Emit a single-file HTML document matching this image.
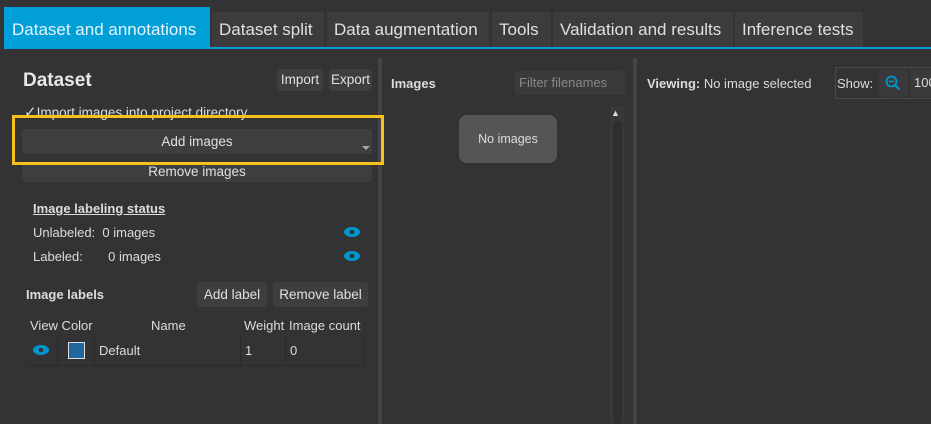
<!DOCTYPE html>
<html><head><style>
*{margin:0;padding:0;box-sizing:border-box}
body{width:931px;height:424px;background:#333335;font-family:"Liberation Sans",sans-serif;color:#dcdcdc;position:relative;overflow:hidden;font-size:13px}
.a{position:absolute;white-space:nowrap}
.tab{position:absolute;top:12px;height:35px;background:#3c3c3e;font-size:17px;line-height:35px;color:#e0e0e0;padding-left:7px}
.btn{position:absolute;background:#3e3e40;border-radius:3px;text-align:center;color:#e0e0e0;font-size:13.5px}
.eye{position:absolute;width:16px;height:10px}
</style></head><body>
<div class="a" style="left:4px;top:7px;width:206px;height:40px;background:#009fd8;color:#e8f4fa;font-size:17px;line-height:45px;padding-left:8px">Dataset and annotations</div>
<div class="tab" style="left:212px;width:112px">Dataset split</div>
<div class="tab" style="left:327px;width:162px">Data augmentation</div>
<div class="tab" style="left:492px;width:59px">Tools</div>
<div class="tab" style="left:553px;width:180px">Validation and results</div>
<div class="tab" style="left:735px;width:128px">Inference tests</div>
<div class="a" style="left:4px;top:47px;width:927px;height:2px;background:#009fd8"></div>

<div class="a" style="left:378px;top:58px;width:4px;height:366px;background:#444446"></div>
<div class="a" style="left:610px;top:106px;width:14px;height:318px;background:#38383a"></div>
<div class="a" style="left:611px;top:108px;font-size:9px;color:#ddd">&#9650;</div>
<div class="a" style="left:613px;top:121px;width:9px;height:303px;background:#2e2e30;border-radius:4px"></div>
<div class="a" style="left:633px;top:58px;width:4px;height:366px;background:#444446"></div>

<div class="a" style="left:23px;top:70px;font-size:19px;font-weight:bold;color:#e8e8e8">Dataset</div>
<div class="btn" style="left:277px;top:69px;width:46px;height:22px;line-height:22px">Import</div>
<div class="btn" style="left:329px;top:69px;width:43px;height:22px;line-height:22px">Export</div>
<div class="a" style="left:24px;top:103px;font-size:13.5px"><span style="font-size:15px">&#10003;</span>Import images into project directory</div>
<div class="btn" style="left:22px;top:162px;width:350px;height:20px;line-height:20px">Remove images</div>
<div class="btn" style="left:22px;top:129px;width:350px;height:25px;line-height:26px">Add images</div>
<div class="a" style="left:362px;top:146px;width:0;height:0;border-left:4px solid transparent;border-right:4px solid transparent;border-top:4px solid #aaa"></div>
<div class="a" style="left:12px;top:115px;width:372px;height:50px;border:3px solid #f5c21b"></div>

<div class="a" style="left:33px;top:201px;font-weight:bold;text-decoration:underline">Image labeling status</div>
<div class="a" style="left:33px;top:225px">Unlabeled:&nbsp; 0 images</div>
<div class="a" style="left:33px;top:249px">Labeled:&nbsp;&nbsp;&nbsp;&nbsp;&nbsp;&nbsp; 0 images</div>
<svg class="eye" style="left:344px;top:227px" viewBox="0 0 16 10"><ellipse cx="8" cy="5" rx="8" ry="5" fill="#0097d0"/><circle cx="8" cy="5" r="2.3" fill="#333335"/></svg>
<svg class="eye" style="left:344px;top:251px" viewBox="0 0 16 10"><ellipse cx="8" cy="5" rx="8" ry="5" fill="#0097d0"/><circle cx="8" cy="5" r="2.3" fill="#333335"/></svg>

<div class="a" style="left:26px;top:287px;font-weight:bold">Image labels</div>
<div class="btn" style="left:197px;top:282px;width:70px;height:25px;line-height:25px">Add label</div>
<div class="btn" style="left:273px;top:282px;width:95px;height:25px;line-height:25px">Remove label</div>
<div class="a" style="left:30px;top:318px">View Color</div>
<div class="a" style="left:151px;top:318px">Name</div>
<div class="a" style="left:244px;top:318px">Weight</div>
<div class="a" style="left:289px;top:318px">Image count</div>
<div class="a" style="left:27px;top:336px;width:338px;height:30px;border-bottom:1px solid #2a2a2c"></div>
<div class="a" style="left:57px;top:336px;width:1px;height:30px;background:#2a2a2c"></div>
<div class="a" style="left:94px;top:336px;width:1px;height:30px;background:#2a2a2c"></div>
<div class="a" style="left:240px;top:336px;width:1px;height:30px;background:#2a2a2c"></div>
<div class="a" style="left:285px;top:336px;width:1px;height:30px;background:#2a2a2c"></div>
<div class="a" style="left:364px;top:336px;width:1px;height:30px;background:#2a2a2c"></div>
<svg class="eye" style="left:33px;top:345px" viewBox="0 0 16 10"><ellipse cx="8" cy="5" rx="8" ry="5" fill="#0097d0"/><circle cx="8" cy="5" r="2.3" fill="#333335"/></svg>
<div class="a" style="left:68px;top:342px;width:17px;height:17px;background:#22669e;border:1px solid #ddd"></div>
<div class="a" style="left:99px;top:343px">Default</div>
<div class="a" style="left:245px;top:343px">1</div>
<div class="a" style="left:290px;top:343px">0</div>

<div class="a" style="left:391px;top:76px;font-weight:bold">Images</div>
<div class="a" style="left:515px;top:71px;width:110px;height:24px;background:#3a3a3c;border-radius:3px;color:#888;line-height:24px;padding-left:4px">Filter filenames</div>
<div class="a" style="left:459px;top:115px;width:98px;height:48px;background:#555557;border-radius:8px;text-align:center;line-height:48px;font-size:12.5px">No images</div>

<div class="a" style="left:647px;top:76px"><b>Viewing:</b> No image selected</div>
<div class="a" style="left:835px;top:67px;width:100px;height:32px;border:1px solid #4a4a4c"></div>
<div class="a" style="left:837px;top:76px">Show:</div>
<div class="a" style="left:879px;top:69px;width:29px;height:28px;background:#3a3a3c;border-radius:3px"></div>
<svg class="a" style="left:885px;top:75px" width="16" height="16" viewBox="0 0 16 16"><circle cx="6.5" cy="6.5" r="5" fill="none" stroke="#0097d0" stroke-width="1.8"/><line x1="4" y1="6.5" x2="9" y2="6.5" stroke="#0097d0" stroke-width="1.6"/><line x1="10" y1="10" x2="14.5" y2="14.5" stroke="#0097d0" stroke-width="2"/></svg>
<div class="a" style="left:911px;top:69px;width:24px;height:28px;background:#3a3a3c;line-height:28px;padding-left:3px">100</div>
</body></html>
